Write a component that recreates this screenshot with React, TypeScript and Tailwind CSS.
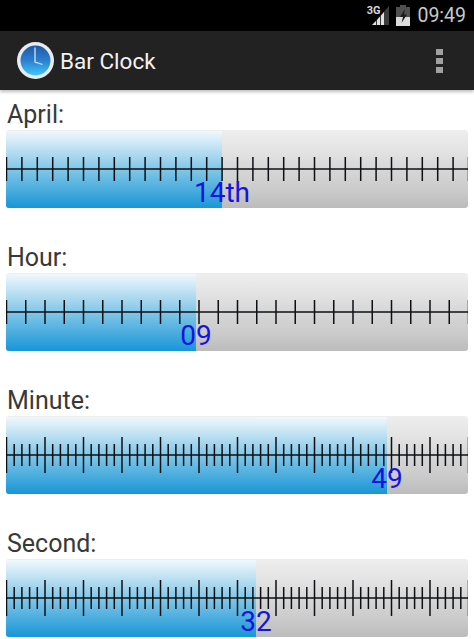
import React from 'react';

const bars = [
    { label: 'April:', divisions: 30, major: 0, fill: 216, value: '14th' },
    { label: 'Hour:', divisions: 24, major: 0, fill: 190, value: '09' },
    { label: 'Minute:', divisions: 60, major: 5, fill: 381, value: '49' },
    { label: 'Second:', divisions: 60, major: 5, fill: 250, value: '32' },
];

function ClockIcon() {
    return (
        <svg width="37" height="37" viewBox="0 0 37 37">
            <defs>
                <linearGradient id="face" x1="0" y1="0" x2="0" y2="1">
                    <stop offset="0" stopColor="#1d5aa4" />
                    <stop offset="0.5" stopColor="#2b7fd0" />
                    <stop offset="1" stopColor="#3fc8fc" />
                </linearGradient>
            </defs>
            <circle cx="18.5" cy="18.5" r="18.5" fill="#e8ecf0" />
            <circle cx="18.5" cy="18.5" r="15" fill="url(#face)" />
            <path d="M18 5.5V20L25.5 22.5" fill="none" stroke="#cfe4f2" strokeWidth="1.3" />
        </svg>
    );
}

function SignalIcon() {
    return (
        <svg width="21" height="21" viewBox="0 0 21 21">
            <path d="M3 20L20 1V20Z" fill="#3c3c3c" />
            <path d="M3 20L7 16V20ZM8 20V15L11 11.5V20ZM12 20V10.5L15 7V20Z" fill="#e2e2e2" />
        </svg>
    );
}

function BatteryIcon() {
    return (
        <svg width="14" height="21" viewBox="0 0 14 21">
            <path d="M4 0H10V2H14V21H0V2H4Z" fill="#505050" />
            <path d="M0 12H14V21H0Z" fill="#dcdcdc" />
            <path d="M9 4L4 12H7L5.5 18L11 9.5H8Z" fill="#1c1c1c" />
        </svg>
    );
}

function Ruler({ divisions, major }: { divisions: number; major: number }) {
    const step = 462 / divisions;
    const ticks = [];
    for (let i = 0; i <= divisions; i++) {
        const isMajor = major > 0 && i % major === 0;
        const half = major === 0 ? 12 : isMajor ? 18 : 11;
        ticks.push(
            <line key={i} x1={i * step + 0.5} x2={i * step + 0.5} y1={39 - half} y2={39 + half} stroke="#0c1014" strokeWidth="1.5" />
        );
    }
    return (
        <svg className="absolute left-0 top-0" width="462" height="78" viewBox="0 0 462 78">
            {ticks}
            <line x1="0" x2="462" y1="39" y2="39" stroke="#0c1014" strokeWidth="1.6" />
        </svg>
    );
}

export default function App() {
    return (
        <div className="w-[474px] h-[639px] overflow-hidden bg-white font-['Roboto',sans-serif]">
            <div className="h-[31px] bg-black flex items-center justify-end pr-[8px]">
                <div className="text-[11px] leading-none text-[#d8d8d8] font-bold -mr-[11px] -mt-[11px] relative z-10">3G</div>
                <SignalIcon />
                <div className="ml-[6px]">
                    <BatteryIcon />
                </div>
                <div className="ml-[7px] text-[19.5px] text-[#c8c8c8]">09:49</div>
            </div>
            <div className="h-[59px] bg-[#222222] flex items-center pl-[17px] pr-[31px] shadow-[0_2px_3px_rgba(0,0,0,0.25)] relative">
                <ClockIcon />
                <div className="ml-[6px] pt-[2px] text-[22.5px] text-[#f2f2f2]">Bar Clock</div>
                <div className="ml-auto flex flex-col gap-[3px]">
                    <div className="w-[7px] h-[6px] bg-[#a0a0a0]" />
                    <div className="w-[7px] h-[6px] bg-[#a0a0a0]" />
                    <div className="w-[7px] h-[6px] bg-[#a0a0a0]" />
                </div>
            </div>
            <div className="flex flex-col gap-[34px] px-[6px] pt-[9px]">
                {bars.map((bar) => (
                    <div key={bar.label}>
                        <div className="h-[31px] text-[25px] leading-[31px] text-[#383838] pl-[1px]">{bar.label}</div>
                        <div className="relative h-[78px] w-[462px] flex rounded-[3px] overflow-hidden bg-[linear-gradient(to_bottom,#eeeeee_0%,#e4e4e4_25%,#d6d6d6_50%,#cccccc_75%,#bcbcbc_100%)]">
                            <div
                                className="h-[77px] mt-[1px] bg-[linear-gradient(to_bottom,#f0f8fc_0%,#8ccbe9_45%,#1896d6_100%)]"
                                style={{ width: bar.fill }}
                            />
                            <Ruler divisions={bar.divisions} major={bar.major} />
                            <div
                                className="absolute top-[47px] -translate-x-1/2 text-[28px] leading-[32px] text-[#1414e0]"
                                style={{ left: bar.fill }}
                            >
                                {bar.value}
                            </div>
                        </div>
                    </div>
                ))}
            </div>
        </div>
    );
}
